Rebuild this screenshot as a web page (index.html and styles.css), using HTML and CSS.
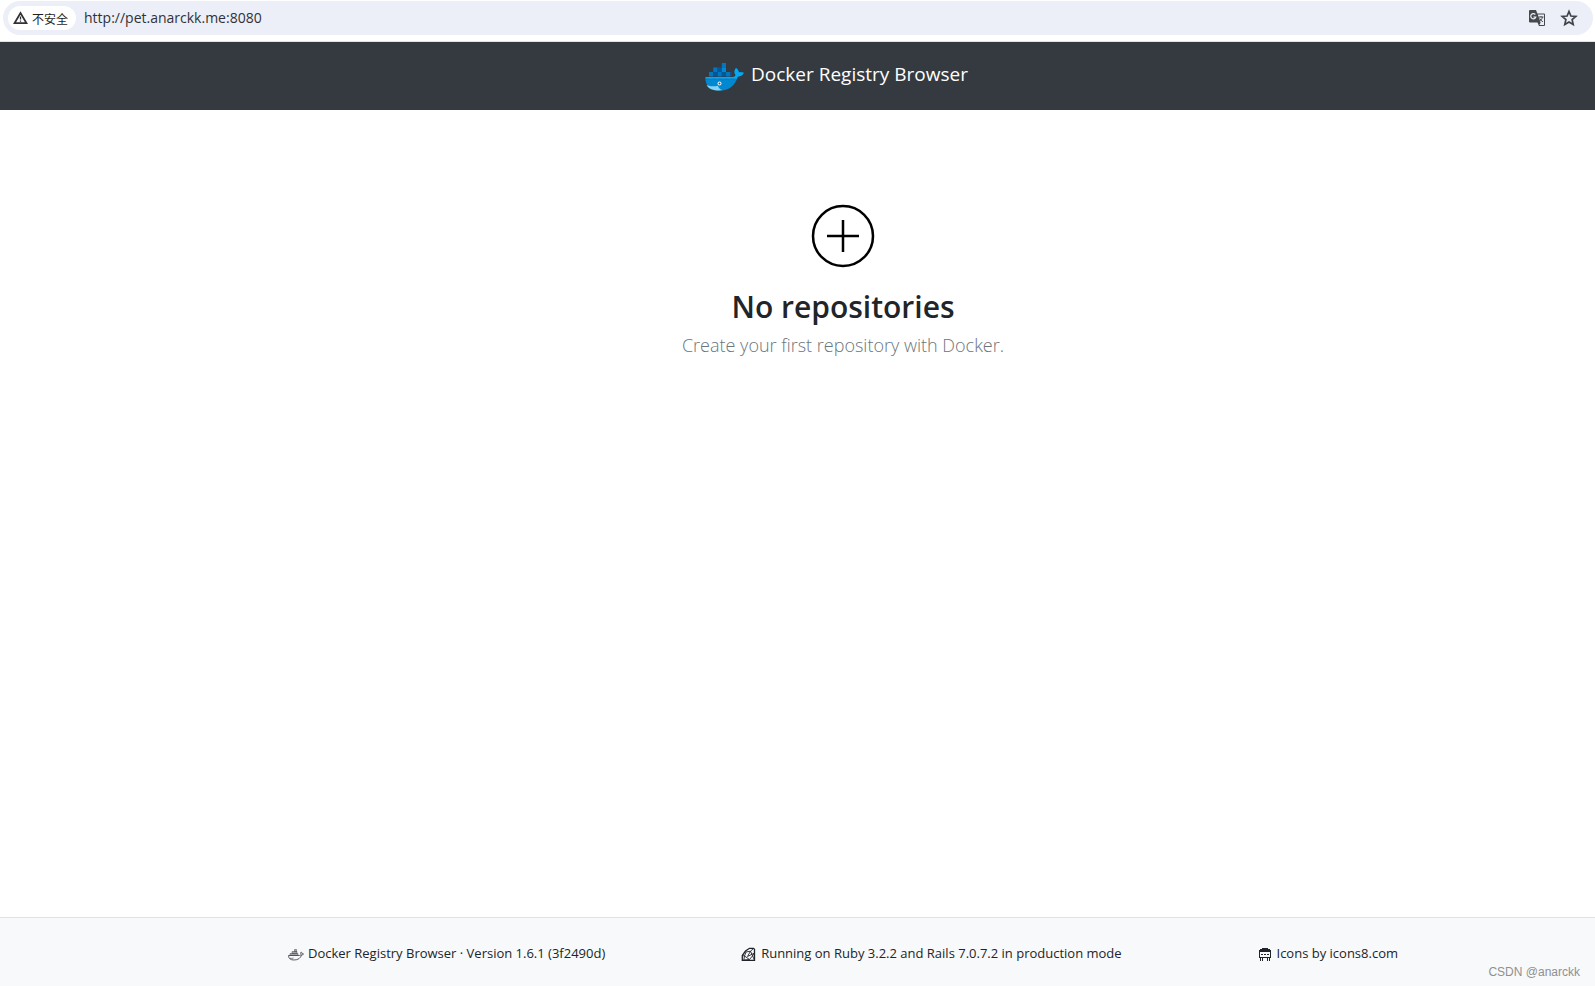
FILE: index.html
```html
<!DOCTYPE html>
<html lang="en">
<head>
    <meta charset="UTF-8">
    <meta name="viewport" content="width=device-width, initial-scale=1.0">
    <title>Docker Registry Browser</title>
    <link rel="stylesheet" href="styles.css">
</head>
<body>
    <!-- Address bar -->
    <div class="toolbar">
        <div class="address-bar">
            <button class="security-chip" type="button">
                <svg width="15" height="14" viewBox="0 0 15 14" fill="none" stroke="#303236">
                    <path d="M7.500 2L13.500 12.200h-12z" stroke-width="1.700"/>
                    <path d="M7.500 5.500v3M7.500 9.500v1.300" stroke-width="1.300"/>
                </svg>
                <span lang="zh">不安全</span>
            </button>
            <input class="url" type="text" aria-label="Address" value="http://pet.anarckk.me:8080">
            <button class="bar-btn" type="button" aria-label="Translate">
                <svg width="18" height="18" viewBox="0 0 18 18">
                    <path d="M2 1h6l1.300 3.500H16a1 1 0 0 1 1 1V16a1 1 0 0 1-1 1h-5L9.500 13.500H2a1 1 0 0 1-1-1V2a1 1 0 0 1 1-1z" fill="#45484c"/>
                    <path d="M9.800 5.500H16V16h-4.600l1.200-2.200z" fill="#eceef8"/>
                    <path d="M7.300 5.500A2.600 2.600 0 1 0 7.800 8H5.400" fill="none" stroke="#eceef8" stroke-width="1.200"/>
                    <path d="M10.500 8h5M13 7v1M14.500 8c-.4 2-1.600 3.300-3 4.300M11.700 9.500c.7 1.400 1.800 2.400 3.200 3.300" fill="none" stroke="#45484c"/>
                </svg>
            </button>
            <button class="bar-btn" type="button" aria-label="Bookmark">
                <svg width="18" height="18" viewBox="0 0 18 18" fill="none" stroke="#404347" stroke-width="1.700">
                    <path d="M9 2.500l1.900 4.500 4.900.4-3.700 3.200 1.100 4.800L9 12.900l-4.200 2.500 1.100-4.800L2.200 7.400l4.900-.4z"/>
                </svg>
            </button>
        </div>
    </div>

    <header class="navbar">
        <a class="brand" href="#">
            <svg width="40" height="30" viewBox="0 0 40 30">
                <path d="M1.500 17h26c2.600 0 3.800-1 4.200-3-1.700-2-1.600-4.500.3-7 1.800 1 2.700 2.800 2.700 4.600 1.500-.6 3.500-.5 5.100.2-1 2.400-3 3.700-6 3.700C31.500 23.500 26 29.500 16.500 29.500 7 29.500 1 25 1.500 17z" fill="#0288d1"/>
                <path d="M31.700 14c-1.700-2-1.600-4.500.3-7 1.800 1 2.700 2.800 2.700 4.600 1.500-.6 3.500-.5 5.100.2-1 2.400-3 3.700-6 3.700-.4 1-.6 1.500-1 2H1.500V16h26c2.400 0 3.700-.5 4.200-2z" fill="#03a9f4"/>
                <path d="M1.500 19l2.500-1 3 1 3-1 3 1 3-1 3 1 3-1 3 1 3-1 3 1" fill="none" stroke="#0277bd"/>
                <path d="M2.500 24C6 25.500 10 25.500 14 24.700c.5 2.300 2 3.800 4.500 4.600C10.500 30 5 28.500 2.500 24z" fill="#81d4fa"/>
                <path d="M5 11h4.300v4.500H5zM13.500 11h4.300v4.500h-4.300zM22 11h4.200v4.500H22zM9.300 6.500h4.200V11H9.300zM17.800 2H22v4.500h-4.200z" fill="#0277bd"/>
                <path d="M9.300 11h4.200v4.500H9.300zM17.800 11H22v4.500h-4.200zM26.200 11h1.600v4.500h-1.600zM13.500 6.500h4.300V11h-4.300z" fill="#01579b"/>
                <path d="M17.800 6.500H22V11h-4.200z" fill="#0288d1"/>
                <circle cx="15.500" cy="22.500" r="2" fill="#e1f5fe"/>
                <circle cx="15.500" cy="22.500" r="1" fill="#455a64"/>
            </svg>
            <span>Docker Registry Browser</span>
        </a>
    </header>

    <main class="content">
        <svg class="plus-icon" width="64" height="64" viewBox="0 0 64 64" fill="none" stroke="#000">
            <circle cx="32" cy="32" r="30" stroke-width="2.500"/>
            <path d="M32 16v32M16 32h32" stroke-width="2.500"/>
        </svg>
        <h1>No repositories</h1>
        <p class="lead">Create your first repository with Docker.</p>
    </main>

    <footer class="footer">
        <div class="container">
            <a class="footer-item" href="#">
                <svg width="16" height="16" viewBox="0 0 16 16" fill="none" stroke="#4a4e53">
                    <path d="M.5 9.500h11c1 0 1.500-.5 1.600-1.200-.6-.8-.5-1.600.1-2.300.7.400 1 1 1 1.700.5-.2 1-.1 1.400.2-.4.800-1 1.100-2 1.100C12.500 12 10.300 14 6 14 2.500 14 .5 12.500.5 9.500z" stroke-width=".9"/>
                    <path d="M2 7.500h8v2H2zM4 5.500h5v2H4zM6.500 3.500h2v2h-2z" fill="#4a4e53" fill-opacity=".5" stroke-width=".5"/>
                    <path d="M1.500 12.200c1.500.4 3 .3 4-.2" stroke-width=".7"/>
                </svg>
                <span>Docker Registry Browser · Version 1.6.1 (3f2490d)</span>
            </a>
            <span class="footer-item">
                <svg width="16" height="16" viewBox="0 0 16 16" fill="none" stroke="#212529">
                    <path d="M1.300 14.300V9.500L4.500 5l4-2.700h4l1 1v11z" stroke-width="1.300"/>
                    <path d="M5 6l4.500-.8L12.500 2.500M5 6l-1.500 4 5 3.500M1.300 9.500l2.200.5-.7 4M8.500 13.500l-5.500.5M9.500 5.200l4 9M9.500 5.200L6.500 10.500l7-3.500M8.500 13.500l5-6" stroke-width=".9"/>
                </svg>
                <span>Running on Ruby 3.2.2 and Rails 7.0.7.2 in production mode</span>
            </span>
            <a class="footer-item" href="#">
                <svg width="15" height="16" viewBox="0 0 15 16" fill="#212529" shape-rendering="crispEdges">
                    <path d="M4 2h6v1h2v1h1v2H1V4h1V3h2z"/>
                    <path d="M1 6h1v6H1zM12 6h1v6h-1zM1 11h12v1H1z"/>
                    <path d="M3 8h2v1H3zM6 8h2v1H6zM9 8h2v1H9zM2 12h1v3H2zM4 12h1v3H4zM9 12h1v3H9zM11 12h1v3h-1z"/>
                </svg>
                <span>Icons by icons8.com</span>
            </a>
        </div>
        <span class="watermark">CSDN @anarckk</span>
    </footer>
</body>
</html>
```
FILE: styles.css
```css
* {
    box-sizing: border-box;
}

body {
    margin: 0;
    min-height: 100vh;
    display: flex;
    flex-direction: column;
    background: #fff;
    color: #212529;
    font-family: "Segoe UI", "Open Sans", "Noto Sans CJK SC", sans-serif;
}

a {
    color: inherit;
    text-decoration: none;
}

svg {
    display: block;
    flex: none;
}

button {
    border: none;
    padding: 0;
    background: none;
    cursor: pointer;
}

/* Address bar */
.toolbar {
    padding: 1px 2px 6px 3px;
    border-bottom: 1px solid #dfe3e6;
}

.address-bar {
    display: flex;
    align-items: center;
    gap: 14px;
    height: 34px;
    padding: 0 15px 0 5px;
    border-radius: 17px;
    background: #eceef8;
}

.security-chip {
    display: flex;
    align-items: center;
    gap: 4px;
    height: 24px;
    padding: 0 8px 0 5px;
    border-radius: 12px;
    background: #fff;
    color: #1f1f1f;
    font-family: "Noto Sans CJK SC", sans-serif;
    font-size: 12px;
}

.url {
    flex: 1;
    min-width: 0;
    margin-left: -6px;
    padding: 0 0 2px;
    border: none;
    outline: none;
    background: none;
    color: #303236;
    font-family: inherit;
    font-size: 14px;
}

/* Navbar */
.navbar {
    display: flex;
    justify-content: center;
    padding: 16px 0 16px 77px;
    background: #343a40;
}

.brand {
    display: flex;
    align-items: center;
    gap: 7px;
    height: 36px;
    color: #fff;
    font-size: 19px;
}

.brand span {
    padding-bottom: 4px;
}

/* Empty state */
.content {
    flex: 1;
    display: flex;
    flex-direction: column;
    align-items: center;
    padding: 94px 0 0 91px;
}

.plus-icon {
    margin-bottom: 20px;
}

h1 {
    margin: 0;
    font-size: 30px;
    font-weight: 600;
    line-height: 38px;
}

.lead {
    margin: 0;
    color: #6c757d;
    font-size: 18px;
    font-weight: 300;
    line-height: 38px;
}

/* Footer */
.footer {
    position: relative;
    padding: 24px 0 21px 91px;
    border-top: 1px solid #dee2e6;
    background: #f8f9fa;
}

.container {
    display: flex;
    justify-content: space-between;
    max-width: 1140px;
    margin: 0 auto;
    padding: 0 15px;
}

.footer-item {
    display: flex;
    align-items: center;
    gap: 4px;
    font-size: 13px;
    line-height: 23px;
}

.watermark {
    position: absolute;
    right: 15px;
    bottom: 6px;
    color: #8e9093;
    font-family: "Liberation Sans", Arial, sans-serif;
    font-size: 12px;
    line-height: 16px;
}
```
